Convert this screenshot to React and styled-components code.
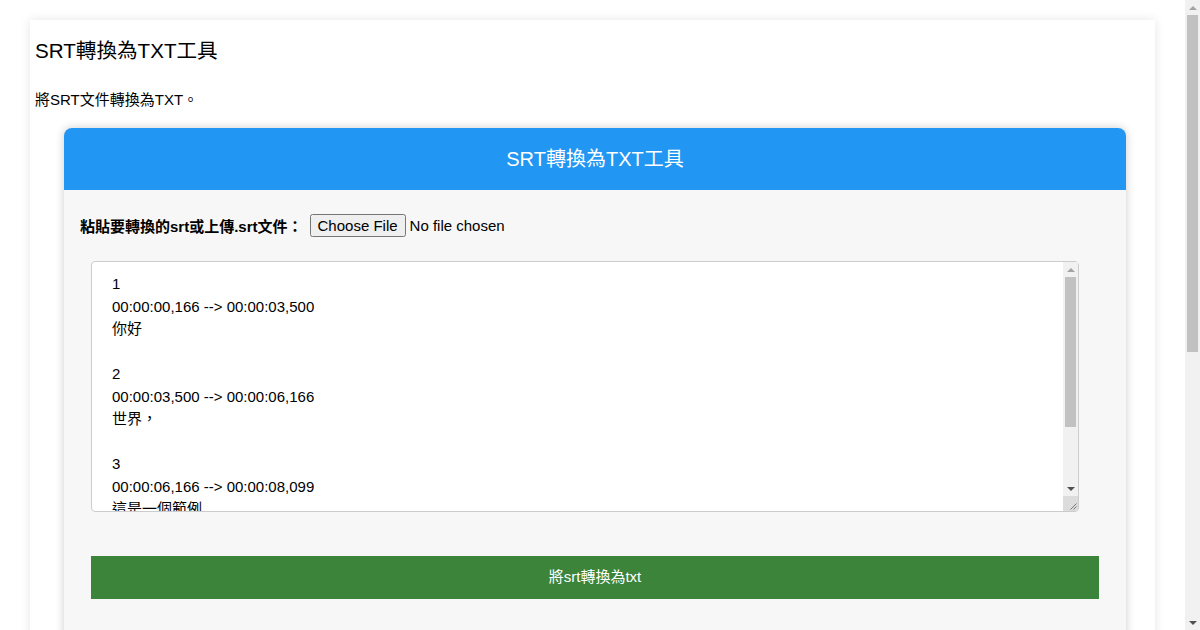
import React from 'react'
import styled, { createGlobalStyle } from 'styled-components'

const GlobalStyle = createGlobalStyle`
  html, body {
    margin: 0;
    padding: 0;
    background: #fff;
  }
  body {
    font-family: 'Liberation Sans', 'Noto Sans CJK TC', Arial, sans-serif;
    font-size: 15px;
    color: #000;
  }
`

const Page = styled.div`
  padding: 20px 30px;
  margin-right: 15px;
`

const Container = styled.div`
  background: #fff;
  box-shadow: 0 0 10px rgba(0, 0, 0, 0.1);
  padding: 16px 5px 40px;
`

const PageTitle = styled.h1`
  margin: 0;
  font-size: 20.6px;
  font-weight: normal;
  line-height: 30px;
`

const Intro = styled.p`
  margin: 23px 0 17px;
  line-height: 22px;
`

const ToolCard = styled.div`
  width: 1062px;
  margin-left: 29px;
  background: #f7f7f7;
  border-radius: 8px;
  overflow: hidden;
  box-shadow: 0 0 10px rgba(0, 0, 0, 0.2);
`

const ToolHeader = styled.div`
  height: 62px;
  background: #2196f3;
  color: #fff;
  font-size: 20px;
  line-height: 62px;
  text-align: center;
`

const ToolBody = styled.div`
  padding: 24px 16px 44px;
`

const UploadRow = styled.div`
  display: flex;
  align-items: center;
  height: 23px;
`

const Label = styled.label`
  font-weight: bold;
  margin-right: 7px;
`

const FileInput = styled.input`
  font-family: 'Liberation Sans', Arial, sans-serif;
  font-size: 15px;
`

const Section = styled.div`
  padding: 0 11px;
`

const AreaWrap = styled.div`
  position: relative;
  width: ${p => p.$width}px;
  margin-top: 24px;
`

const SrtArea = styled.textarea`
  display: block;
  box-sizing: border-box;
  width: 100%;
  height: 251px;
  padding: 11px 36px 10px 20px;
  border: 1px solid #ccc;
  border-radius: 4px;
  background: #fff;
  font-family: 'Liberation Sans', 'Noto Sans CJK TC', Arial, sans-serif;
  font-size: 15px;
  line-height: 1.5;
  color: #000;
  overflow: hidden;
  resize: none;
`

const ActionButton = styled.button`
  display: block;
  width: 100%;
  height: 43px;
  margin-top: 44px;
  padding: 0 0 5px;
  border: none;
  border-radius: 0;
  background: #3b843a;
  color: #fff;
  font-family: 'Liberation Sans', 'Noto Sans CJK TC', Arial, sans-serif;
  font-size: 15px;
  cursor: pointer;
`

/* classic scrollbar look, drawn over the scrolling box */
const Track = styled.div`
  position: ${p => (p.$fixed ? 'fixed' : 'absolute')};
  top: ${p => p.$inset}px;
  right: ${p => p.$inset}px;
  width: 15px;
  height: ${p => p.$height};
  background: #f1f1f1;
  display: flex;
  flex-direction: column;
`

const ArrowBtn = styled.div`
  flex: none;
  height: 15px;
  display: flex;
  align-items: center;
  justify-content: center;
`

const Thumb = styled.div`
  flex: none;
  height: ${p => p.$size}px;
  margin: 0 2px;
  background: #c1c1c1;
`

const Filler = styled.div`
  flex: 1;
`

const Corner = styled.div`
  position: absolute;
  right: 1px;
  bottom: 1px;
  width: 15px;
  height: 15px;
  background: #dcdcdc;
  border-bottom-right-radius: 3px;
`

const Arrow = ({ up }) => (
  <svg width="8" height="4" viewBox="0 0 8 4">
    <path d={up ? 'M0 4h8L4 0z' : 'M0 0h8L4 4z'} fill={up ? '#a3a3a3' : '#505050'} />
  </svg>
)

const ScrollBar = ({ fixed, inset, height, thumb }) => (
  <Track $fixed={fixed} $inset={inset} $height={height}>
    <ArrowBtn><Arrow up /></ArrowBtn>
    <Thumb $size={thumb} />
    <Filler />
    <ArrowBtn><Arrow /></ArrowBtn>
  </Track>
)

const sample = `1
00:00:00,166 --> 00:00:03,500
你好

2
00:00:03,500 --> 00:00:06,166
世界，

3
00:00:06,166 --> 00:00:08,099
這是一個範例

4
00:00:08,099 --> 00:00:10,000
字幕文件`

export default function App() {
  return (
    <>
      <GlobalStyle />
      <Page>
        <Container>
          <PageTitle>SRT轉換為TXT工具</PageTitle>
          <Intro>將SRT文件轉換為TXT。</Intro>
          <ToolCard>
            <ToolHeader>SRT轉換為TXT工具</ToolHeader>
            <ToolBody>
              <UploadRow>
                <Label htmlFor="srtFile">粘貼要轉換的srt或上傳.srt文件：</Label>
                <FileInput id="srtFile" type="file" accept=".srt" />
              </UploadRow>
              <Section>
                <AreaWrap $width={988}>
                  <SrtArea defaultValue={sample} />
                  <ScrollBar inset={1} height="234px" thumb={150} />
                  <Corner>
                    <svg width="15" height="15" viewBox="0 0 15 15">
                      <path d="M13.5 7.5l-6 6M13.5 10.5l-3 3" stroke="#7a7a7a" strokeWidth="1" />
                    </svg>
                  </Corner>
                </AreaWrap>
                <ActionButton>將srt轉換為txt</ActionButton>
              </Section>
            </ToolBody>
          </ToolCard>
        </Container>
      </Page>
      <ScrollBar fixed inset={0} height="100vh" thumb={337} />
    </>
  )
}
